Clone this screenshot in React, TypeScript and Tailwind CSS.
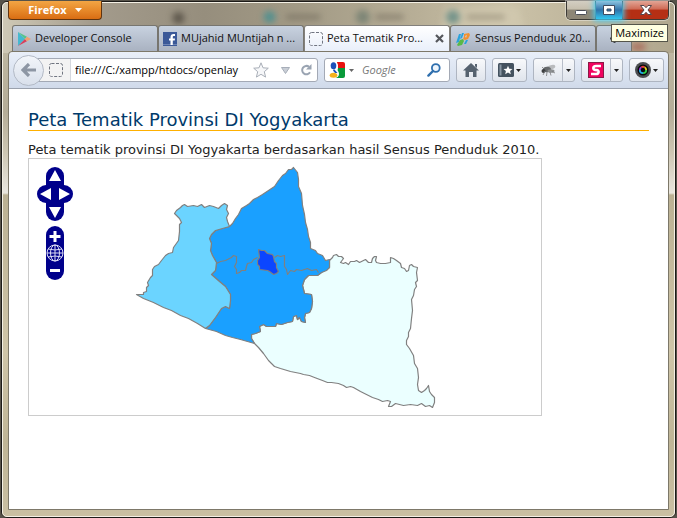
import React from "react";

const uiFont = "font-['Open_Sans','Noto_Sans',sans-serif]";
const pageFont = "font-['DejaVu_Sans',sans-serif]";

const toolButton =
  "flex h-6 shrink-0 items-center justify-center rounded-[3px] border border-[#aeb5c1] bg-gradient-to-b from-[#f8f9fb] to-[#dfe4ec]";

/* ---------- small icons ---------- */

const Caret = ({ className = "text-[#222]" }: { className?: string }) => (
  <svg viewBox="0 0 5 3" className={`h-[3px] w-[5px] shrink-0 ${className}`}>
    <path d="M0 0h5L2.5 3z" fill="currentColor" />
  </svg>
);

const BlankPageIcon = () => (
  <svg viewBox="0 0 14 14" className="size-3.5 shrink-0">
    <rect
      x=".5"
      y=".5"
      width="13"
      height="13"
      rx="2"
      fill="none"
      stroke="#707580"
      strokeDasharray="3 1.5"
    />
  </svg>
);

const PlayIcon = () => (
  <svg viewBox="0 0 14 16" className="h-4 w-3.5 shrink-0">
    <path d="M1 1v14l7-7z" fill="#45b8d0" />
    <path d="M1 1l7 7 2-2.300z" fill="#55c48c" />
    <path d="M1 15l7-7 2 2.300z" fill="#d8405c" />
    <path d="M10 5.700L8 8l2 2.300L14 8z" fill="#f2a070" />
  </svg>
);

const FacebookIcon = () => (
  <svg viewBox="0 0 14 14" className="size-3.5 shrink-0">
    <path d="M0 0h14v14H0z" fill="#3b5998" />
    <path d="M0 12h14v1H0z" fill="#6d84b4" />
    <path
      d="M7.500 13V8.500H6v-2h1.500V5c0-2 1.200-3 3-3H12v2h-1c-.8 0-1.200.3-1.200 1v1.500H12l-.3 2H9.800V13z"
      fill="#fff"
    />
  </svg>
);

const BpsIcon = () => (
  <svg viewBox="0 0 16 16" className="size-4 shrink-0">
    <path d="M4 3l2 0-2 8-3 1zM7 2h2L7 7 5 8z" fill="#2aa3dc" />
    <path d="M9 3l5-1 1 2-2 4-3 1-2-1 1-2z" fill="#f3912f" />
    <path d="M10 5l2-1-1 3z" fill="#c7d0dc" />
    <path d="M5 9l3-1 1 2-2 4-4 1-1-1z" fill="#58b947" />
    <path d="M11 9l2 0-2 4H9z" fill="#2aa3dc" />
  </svg>
);

const GoogleIcon = () => (
  <svg viewBox="0 0 16 16" className="size-4 shrink-0">
    <path d="M8 0h6a2 2 0 0 1 2 2v4H9z" fill="#e8110e" />
    <path d="M9 6h7v8a2 2 0 0 1-2 2H7z" fill="#0a9a3a" />
    <path
      d="M5 0c3 0 4 2 4 4 0 1.500-1.200 2.500-1.200 3.300C8 8.500 10 9 10 12c0 2.500-2 4-5 4-3 0-5-1-5-3 0-2 2-3 5-3-.8-.7-.8-1.300-.5-2C2 8 1 6 1 4c0-2.500 2-4 4-4z"
      fill="#fff"
    />
    <ellipse cx="4.500" cy="3.700" rx="2.800" ry="3.500" fill="#1c50b8" />
    <path d="M5 7l3.500 4-2.500 0-2-2.500z" fill="#1c50b8" />
    <ellipse cx="4.500" cy="13.300" rx="3.800" ry="2.500" fill="#f6b21b" />
  </svg>
);

const StarIcon = () => (
  <svg viewBox="0 0 16 16" className="size-4 shrink-0">
    <path
      d="M8 .8l2 5 5.300.4-4 3.500 1.300 5.400L8 12.300l-4.600 2.800 1.300-5.400-4-3.500L6 5.800z"
      fill="#f6f7f9"
      stroke="#a9afb8"
    />
  </svg>
);

const ReloadIcon = () => (
  <svg viewBox="0 0 12 12" className="size-3 shrink-0">
    <path
      d="M9 2.800A4.200 4.200 0 1 0 10 8.200"
      fill="none"
      stroke="#9aa4b2"
      strokeWidth="2"
    />
    <path d="M11.500 0v5.500H6z" fill="#9aa4b2" />
  </svg>
);

const SearchIcon = () => (
  <svg viewBox="0 0 14 14" className="size-3.5">
    <circle cx="8.800" cy="5" r="3.900" fill="#eef5fc" stroke="#2f6fae" strokeWidth="1.800" />
    <path d="M6 8l-4.600 4.600" stroke="#2f6fae" strokeWidth="2.400" strokeLinecap="round" />
  </svg>
);

const HomeIcon = () => (
  <svg viewBox="0 0 16 14" className="h-3.5 w-4">
    <path d="M8 0l8 7.500H13.500V14H10V9H6v5H2.500V7.500H0z" fill="#56626f" />
    <path d="M12 1h2v4l-2-1.800z" fill="#56626f" />
  </svg>
);

const BookmarksIcon = () => (
  <svg viewBox="0 0 16 14" className="h-3.5 w-4 shrink-0">
    <rect width="16" height="14" rx="1.500" fill="#44525f" />
    <path d="M1.500 1.500h2v11h-2z" fill="#8896a3" />
    <path
      d="M10 2.800l1.300 2.900 3.200.3-2.400 2.100.7 3.100L10 9.600l-2.800 1.600.7-3.100L5.500 6l3.200-.3z"
      fill="#fff"
    />
  </svg>
);

const FlyIcon = () => (
  <svg viewBox="0 0 16 14" className="h-3.5 w-4">
    <ellipse cx="10.500" cy="4.500" rx="5" ry="2.200" transform="rotate(-18 10.500 4.500)" fill="#b9bbbd" />
    <ellipse cx="7" cy="6.500" rx="4" ry="2.800" fill="#66696b" />
    <ellipse cx="11" cy="8" rx="3.500" ry="1.800" fill="#8b8e90" />
    <circle cx="3.500" cy="8" r="2" fill="#3c3e40" />
    <path
      d="M5 8l-2 4M7 9l-.5 4M10 9l1 3.500M12 8.500l3 1.500M4 6L2 4"
      stroke="#77797b"
      strokeWidth=".8"
    />
  </svg>
);

const StylishIcon = () => (
  <svg viewBox="0 0 16 16" className="size-4">
    <path d="M0 0h16v16H0z" fill="#8b1a45" />
    <path d="M1 1h14v14H1z" fill="#f0035f" />
    <path
      d="M13 4H8C4.800 4 4.500 7.500 7 7.900l2 .2c2.500.4 2 3.900-1 3.900H3"
      fill="none"
      stroke="#fff"
      strokeWidth="2.600"
    />
  </svg>
);

const LensIcon = () => (
  <svg viewBox="0 0 16 16" className="size-4 shrink-0">
    <circle cx="8" cy="8" r="8" fill="#4b4d50" />
    <circle cx="8" cy="8" r="5.500" fill="#08090a" />
    <g fill="none" strokeWidth="1.800">
      <path d="M4.800 8A3.200 3.200 0 0 1 6.400 5.200" stroke="#9b35e0" />
      <path d="M6.400 5.200A3.200 3.200 0 0 1 9.600 5.200" stroke="#e8403a" />
      <path d="M9.600 5.200A3.200 3.200 0 0 1 11.200 8" stroke="#e8d820" />
      <path d="M11.200 8A3.200 3.200 0 0 1 8 11.200" stroke="#2cc84a" />
      <path d="M8 11.200A3.200 3.200 0 0 1 4.800 8" stroke="#20a8e8" />
    </g>
  </svg>
);

/* ---------- window chrome ---------- */

// what shows through the glass of the title bar
const GlassBlobs = () => (
  <div aria-hidden className="pointer-events-none absolute inset-x-0 top-0 h-12 overflow-hidden">
    <svg viewBox="0 0 677 48" preserveAspectRatio="none" className="h-full w-full blur-[3px]">
      <path d="M446 4h74l12 40h-94z" fill="#d3cbb2" opacity=".6" />
      <circle cx="177" cy="15" r="6" fill="#4f483f" opacity=".8" />
      <circle cx="269" cy="14" r="6" fill="#3f8f92" opacity=".8" />
      <path d="M286 12h34v4h-34z" fill="#5f584c" opacity=".6" />
      <circle cx="363" cy="14" r="7" fill="#5c6f66" opacity=".6" />
      <path d="M376 12h28v4h-28z" fill="#5f584c" opacity=".6" />
      <circle cx="454" cy="14" r="7" fill="#4f7f7c" opacity=".7" />
      <path d="M468 12h38v4h-38z" fill="#7a715f" opacity=".6" />
      <path d="M634 40h14v8h-14z" fill="#a5584a" opacity=".7" />
    </svg>
  </div>
);

const WindowControls = () => (
  <div className="relative flex h-[19px] w-[103px] shrink-0 rounded-b-[5px] border border-t-0 border-[#3c3a35] shadow-[0_0_0_1px_#ffffff60]">
    <button
      aria-label="Minimize"
      className="flex flex-1 items-center justify-center rounded-bl-[4px] border-r border-[#4a4842] bg-gradient-to-b from-[#d3cec2] via-[#c6bfae] via-45% to-[#8d8676] to-50%"
    >
      <svg viewBox="0 0 12 5" className="mt-1 h-[5px] w-3">
        <rect x=".5" y=".5" width="11" height="4" rx="1" fill="#fff" stroke="#4b4e58" />
      </svg>
    </button>
    <button
      aria-label="Maximize"
      className="z-10 flex w-[26px] items-center justify-center bg-gradient-to-b from-[#8cc4e0] via-[#2f74ab] via-50% to-[#31c6ee] shadow-[0_0_6px_2px_#45cdf5]"
    >
      <svg viewBox="0 0 12 10" className="h-2.5 w-3">
        <path
          d="M.5.500h11v9H.5zM4 4h4v2H4z"
          fill="#fff"
          fillRule="evenodd"
          stroke="#3c4a60"
        />
      </svg>
    </button>
    <button
      aria-label="Close"
      className="flex w-[46px] items-center justify-center rounded-br-[4px] border-l border-[#5a2018] bg-gradient-to-b from-[#e2a596] via-[#cf6a55] via-45% to-[#b52f14] to-50%"
    >
      <svg viewBox="0 0 12 10" className="h-2.5 w-3">
        <path
          d="M.5.500h3.500l2 2.200L8 .5h3.500L8 5l3.500 4.500H8L6 7.300 4 9.500H.5L4 5z"
          fill="#fff"
          stroke="#54464c"
        />
      </svg>
    </button>
    <span
      role="tooltip"
      className="absolute top-[23px] right-0 z-20 border border-[#55554a] bg-[#ffffe1] px-[3px] text-[11px] leading-4 text-black"
    >
      Maximize
    </span>
  </div>
);

const TitleBar = () => (
  <header className="relative z-20 flex h-6 items-start justify-between">
    <button className="flex h-[19px] w-[94px] items-center justify-center gap-2 rounded-b-[4px] border border-t-0 border-[#5f3410] bg-gradient-to-b from-[#f2a544] via-[#e78a2a] to-[#d96d12] text-[11px] font-bold text-white">
      Firefox
      <svg viewBox="0 0 7 4" className="h-1 w-[7px]">
        <path d="M0 0h7L3.500 4z" fill="#fff" />
      </svg>
    </button>
    <WindowControls />
  </header>
);

const tabs = [
  { label: "Developer Console", icon: <PlayIcon /> },
  { label: "MUjahid MUntijah n ...", icon: <FacebookIcon /> },
  { label: "Peta Tematik Pro...", icon: <BlankPageIcon />, active: true },
  { label: "Sensus Penduduk 20...", icon: <BpsIcon /> },
];

const TabStrip = () => (
  <div role="tablist" className="relative flex h-[26px] pr-9 pl-[3px]">
    {tabs.map((tab) => (
      <div
        key={tab.label}
        className={`flex min-w-0 flex-1 items-center rounded-t-[3px] border border-b-0 px-1 ${
          tab.active
            ? "border-[#82807c] bg-gradient-to-b from-white to-[#e9effa]"
            : "border-[#77756f] bg-gradient-to-b from-[#c8d2e0] to-[#a9b2c1]"
        }`}
      >
        <button
          role="tab"
          aria-selected={!!tab.active}
          className="flex min-w-0 flex-1 items-center gap-1 text-[11px] text-[#111]"
        >
          {tab.icon}
          <span className="overflow-hidden whitespace-nowrap">{tab.label}</span>
        </button>
        {tab.active && (
          <button aria-label="Close tab" className="shrink-0 pr-px">
            <svg viewBox="0 0 9 9" className="size-[9px]">
              <path d="M1 1l7 7M8 1L1 8" stroke="#55575c" strokeWidth="2.200" />
            </svg>
          </button>
        )}
      </div>
    ))}
    <button
      aria-label="Open a new tab"
      className="flex w-9 items-center justify-center rounded-t-[3px] border border-b-0 border-[#77756f] bg-gradient-to-b from-[#c8d2e0] to-[#a9b2c1]"
    >
      <svg viewBox="0 0 9 9" className="size-[9px]">
        <path d="M4.500 0v9M0 4.500h9" stroke="#3e434b" strokeWidth="2" />
      </svg>
    </button>
  </div>
);

const AddressBar = () => (
  <div className="flex min-w-0 flex-1 items-center">
    <button
      aria-label="Back"
      className="z-10 flex size-[31px] shrink-0 items-center justify-center rounded-full border border-[#b3bac6] bg-gradient-to-b from-[#f2f5fa] to-[#d9e0eb]"
    >
      <svg viewBox="0 0 15 14" className="h-3.5 w-[15px]">
        <path
          d="M8 1L2 7l6 6M2.500 7H15"
          fill="none"
          stroke="#8d96a4"
          strokeWidth="3.200"
        />
      </svg>
    </button>
    <div className="-ml-3 flex h-6 min-w-0 flex-1 items-center rounded-[3px] border border-[#a3a9b5] bg-white pr-1">
      <span className="flex h-full w-[38px] shrink-0 items-center justify-end border-r border-[#d5d8de] bg-[#f3f3f3] pr-[7px]">
        <BlankPageIcon />
      </span>
      <input
        aria-label="Location"
        defaultValue="file:///C:/xampp/htdocs/openlay"
        className="min-w-0 flex-1 pl-1 text-[11px] text-black outline-none"
      />
      <button aria-label="Bookmark this page" className="ml-1">
        <StarIcon />
      </button>
      <button aria-label="Show history" className="ml-3">
        <svg viewBox="0 0 9 7" className="h-[7px] w-[9px]">
          <path d="M.5.500h8L4.500 6.500z" fill="#c9ced6" stroke="#a7aeb9" />
        </svg>
      </button>
      <button aria-label="Reload" className="mr-px ml-2.5">
        <ReloadIcon />
      </button>
    </div>
  </div>
);

const NavToolbar = () => (
  <div className="flex h-[37px] items-center gap-1.5 rounded-t-[4px] border-b border-[#9aa1ad] bg-gradient-to-b from-[#e9eff9] to-[#d0daea] px-1">
    <AddressBar />
    <div className="flex h-6 w-[126px] shrink-0 items-center rounded-[3px] border border-[#a3a9b5] bg-white px-1">
      <GoogleIcon />
      <span className="mx-1 flex">
        <Caret className="text-[#666]" />
      </span>
      <input
        aria-label="Search"
        placeholder="Google"
        className="min-w-0 flex-1 pl-1 text-[11px] italic outline-none placeholder:text-[#777]"
      />
      <button aria-label="Search Google" className="pr-1">
        <SearchIcon />
      </button>
    </div>
    <button aria-label="Home" className={`${toolButton} w-[30px]`}>
      <HomeIcon />
    </button>
    <button aria-label="Bookmarks" className={`${toolButton} w-[35px] gap-0.5`}>
      <BookmarksIcon />
      <Caret />
    </button>
    <div className={toolButton}>
      <button aria-label="Firebug" className="flex w-7 justify-center">
        <FlyIcon />
      </button>
      <button
        aria-label="Firebug menu"
        className="flex h-full w-3 items-center justify-center border-l border-[#b8bec9]"
      >
        <Caret />
      </button>
    </div>
    <div className={toolButton}>
      <button aria-label="Stylish" className="flex w-7 justify-center">
        <StylishIcon />
      </button>
      <button
        aria-label="Stylish menu"
        className="flex h-full w-3 items-center justify-center border-l border-[#b8bec9]"
      >
        <Caret />
      </button>
    </div>
    <button aria-label="Color picker" className={`${toolButton} w-[35px] gap-0.5`}>
      <LensIcon />
      <Caret />
    </button>
  </div>
);

/* ---------- map ---------- */

const regions = [
  {
    name: "Gunung Kidul",
    fill: "#ebffff",
    d: "M329 260L332 257L333 255L336 254L338 256L341 256L343 258L340 262L343 263L345 262L348 264L350 261L354 261L356 260L359 262L363 260L365 259L368 262L371 262L372 258L374 256L376 256L375 260L376 262L380 263L385 263L390 262L390 257L393 258L396 260L400 263L401 267L404 268L406 271L408 270L409 265L411 264L413 266L417 267L416 272L417 280L415 282L416 286L414 289L413 295L411 299L412 310L411 318L410 328L408 332L408 336L406 340L406 344L409 348L413 355L414 363L417 368L418 377L417 384L418 390L421 392L424 390L426 388L428 385L429 391L431 394L434 397L434 402L432 407L429 405L425 406L421 403L417 405L410 404L403 405L395 403L391 406L388 406L390 401L387 400L382 401L378 399L372 397L366 394L360 391L353 387L350 386L346 387L343 385L338 383L331 382L327 382L322 380L314 377L309 375L303 374L300 373L290 371L280 368L274 366L268 360L263 353L258 347L254 343L251 338L251 334L255 333L260 331L259 326L263 324L266 326L275 326L276 323L281 324L287 322L292 321L293 316L296 315L297 319L299 317L301 321L305 322L304 317L305 313L309 312L311 308L312 301L311 294L304 293L302 285L304 279L308 275L317 275L321 272L329 267Z",
  },
  {
    name: "Sleman dan Bantul",
    fill: "#1aa0ff",
    d: "M229 226L232 223L235 218L238 214L241 208L246 205L249 203L253 199L257 197L262 194L268 190L274 186L278 180L282 175L285 173L288 169L291 169L293 167L297 172L298 179L298 186L301 193L302 205L304 214L305 222L307 229L308 236L310 242L310 248L315 250L317 253L322 255L325 260L329 259L329 267L326 270L321 272L317 275L308 275L304 279L302 285L304 293L311 294L312 301L311 308L309 312L305 313L304 317L305 322L301 321L299 317L297 319L296 315L293 316L292 321L287 322L281 324L276 323L275 326L266 326L263 324L259 326L260 331L255 333L251 334L251 338L254 343L240 339L232 337L225 335L216 331L205 328L209 325L215 317L221 308L225 306L229 308L230 300L230 294L225 286L219 281L211 274L215 270L216 262L212 255L210 250L211 243L209 238L211 234L215 230L222 228Z",
  },
  {
    name: "Kulon Progo",
    fill: "#6bd4ff",
    d: "M182 205L184 204L187 206L193 205L197 206L201 204L204 207L209 205L213 206L218 208L221 205L224 203L227 205L226 209L228 213L226 217L227 221L229 226L222 228L215 230L211 234L209 238L211 243L210 250L212 255L216 262L215 270L211 274L219 281L225 286L230 294L230 300L229 308L225 306L221 308L215 317L209 325L205 328L197 323L188 318L180 315L171 310L163 307L153 302L143 298L136 294L143 294L143 292L146 291L146 287L148 285L147 282L150 277L152 275L152 269L154 266L158 264L161 260L165 255L168 253L172 252L173 247L178 240L179 231L179 224L181 222L179 218L174 213L176 210L180 207Z",
  },
  {
    name: "Kota Yogyakarta",
    fill: "#0b46ff",
    d: "M258 249L261 250L264 250L267 253L272 254L273 256L274 261L276 263L276 267L278 271L276 273L273 274L269 271L267 270L259 269L259 266L257 264L257 260L259 257Z",
  },
];

const borders =
  "M216 263L220 261L225 260L231 257L233 255L236 256L236 262L234 266L236 269L236 273L239 272L241 270L245 270L246 266L247 263L251 262L253 259L257 257M274 257L277 255L280 256L284 255L284 266L286 269L287 274L290 270L294 271L296 269L301 270L307 268L311 270L316 269L318 272";

const PanZoomControl = () => (
  <g>
    <rect x="17" y="8" width="18" height="54" rx="9" fill="#00008b" />
    <rect x="8" y="26" width="36" height="18" rx="9" fill="#00008b" />
    <path
      d="M26 11l6 11H20zM26 59l6-11H20zM11 35l11-6v12zM41 35l-11-6v12z"
      fill="#fff"
    />
    <rect x="17" y="67" width="18" height="54" rx="9" fill="#00008b" />
    <path d="M24.500 72h3v4h4v3h-4v4h-3v-4h-4v-3h4zM21 110h10v3H21z" fill="#fff" />
    <g fill="none" stroke="#dcdcf5">
      <circle cx="26" cy="94" r="8" />
      <ellipse cx="26" cy="94" rx="4.500" ry="8" />
      <path d="M26 86v16M18 94h16M19 90q7 2 14 0M19 98q7-2 14 0" />
    </g>
  </g>
);

const ThematicMap = () => (
  <div className="w-full max-w-[514px] border border-[#ccc]">
    <svg
      viewBox="0 0 512 256"
      role="img"
      aria-label="Peta DI Yogyakarta"
      className="block w-full"
    >
      <g
        transform="translate(-28.500 -158.500)"
        stroke="#808080"
        strokeWidth="1.200"
        strokeLinejoin="round"
      >
        {regions.map((region) => (
          <path key={region.name} d={region.d} fill={region.fill} />
        ))}
        <path d={borders} fill="none" />
      </g>
      <PanZoomControl />
    </svg>
  </div>
);

const App = () => {
  return (
    <div
      className={`flex min-h-screen flex-col bg-[#57534a] px-px pt-px ${uiFont}`}
    >
      <div className="flex flex-1 flex-col rounded-[6px] border border-[#1d1b18] bg-[#c6bda2] bg-[linear-gradient(180deg,#c9c2ad_0px,#bcb59f_60px,#b5ad98_110px,#cdc6b2_150px,#e9e6de_191px,#bbb193_193px,#cfc5a8_350px,#bfb596_440px,#cac0a3_518px)]">
        <div className="relative flex flex-1 flex-col rounded-[5px] border border-[#f4f0e4] bg-[linear-gradient(90deg,#cfc9b6_0px,#a39b8c_90px,#968e7d_30%,#a39b86_45%,#b8af97_62%,#cbc2a8_75%,#b0a78e_100%)] bg-[length:100%_50px] bg-no-repeat px-[5px] pb-[6px]">
          <GlassBlobs />
          <div className="-mt-0.5 flex flex-1 flex-col">
            <TitleBar />
            <div className="px-px">
              <TabStrip />
            </div>
            <div className="relative flex flex-1 flex-col rounded-t-[4px] border border-[#7d7869]">
              <NavToolbar />
              <main className={`flex-1 bg-white px-[19px] pt-[21px] ${pageFont}`}>
                <h1 className="border-b border-[#ffb000] text-[18px] leading-5 text-[#003a6b]">
                  Peta Tematik Provinsi DI Yogyakarta
                </h1>
                <p className="mt-2.5 text-[13px] leading-[17px] text-[#222]">
                  Peta tematik provinsi DI Yogyakarta berdasarkan hasil Sensus
                  Penduduk 2010.
                </p>
                <ThematicMap />
              </main>
            </div>
          </div>
        </div>
      </div>
    </div>
  );
};

export default App;
